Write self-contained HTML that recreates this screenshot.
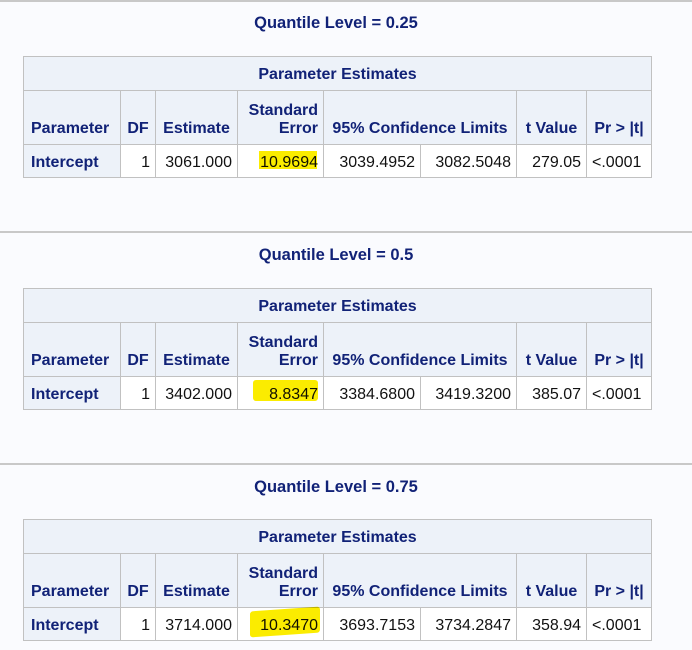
<!DOCTYPE html>
<html><head><style>
html,body{margin:0;padding:0;width:692px;height:650px;overflow:hidden;background:#fafbfe;font-family:"Liberation Sans",Arial,sans-serif}
.sep{position:absolute;left:0;width:692px;height:2px;background:#c8c8c8}
.title{position:absolute;left:0;width:672px;text-align:center;font-weight:bold;font-size:16.5px;color:#112277}
table{position:absolute;left:23px;border-collapse:collapse;font-size:16px;table-layout:fixed;width:628px;z-index:0}
td,th{border:1px solid #c1c1c1;padding:0 5px;white-space:nowrap;overflow:visible}
th{background:#edf2f9;color:#112277;font-weight:bold;font-size:16px}
td{background:#fff;color:#111;text-align:right;padding-top:3px}
td.rh{background:#edf2f9;color:#112277;font-weight:bold;text-align:left;padding-left:7px}
.hl{position:absolute;background:#fbec00;z-index:2;mix-blend-mode:multiply}
.hb th{vertical-align:bottom;padding-bottom:6px}
.t th{padding-top:2px}
</style></head><body>

<div class="sep" style="top:0"></div>
<div class="sep" style="top:231px"></div>
<div class="sep" style="top:463px"></div>

<div class="title" style="top:14px">Quantile Level = 0.25</div>
<div class="title" style="top:246px">Quantile Level = 0.5</div>
<div class="title" style="top:478px">Quantile Level = 0.75</div>

<table style="top:56px">
<colgroup><col style="width:97px"><col style="width:35px"><col style="width:82px"><col style="width:86px"><col style="width:97px"><col style="width:96px"><col style="width:70px"><col style="width:65px"></colgroup>
<tr class="t" style="height:34px"><th colspan="8">Parameter Estimates</th></tr>
<tr class="hb" style="height:54px"><th style="text-align:left;padding-left:7px">Parameter</th><th>DF</th><th>Estimate</th><th style="text-align:right">Standard<br>Error</th><th colspan="2">95% Confidence Limits</th><th>t Value</th><th>Pr &gt; |t|</th></tr>
<tr style="height:33px"><td class="rh">Intercept</td><td>1</td><td>3061.000</td><td>10.9694</td><td>3039.4952</td><td>3082.5048</td><td>279.05</td><td style="text-align:left">&lt;.0001</td></tr>
</table>

<table style="top:288px">
<colgroup><col style="width:97px"><col style="width:35px"><col style="width:82px"><col style="width:86px"><col style="width:97px"><col style="width:96px"><col style="width:70px"><col style="width:65px"></colgroup>
<tr class="t" style="height:34px"><th colspan="8">Parameter Estimates</th></tr>
<tr class="hb" style="height:54px"><th style="text-align:left;padding-left:7px">Parameter</th><th>DF</th><th>Estimate</th><th style="text-align:right">Standard<br>Error</th><th colspan="2">95% Confidence Limits</th><th>t Value</th><th>Pr &gt; |t|</th></tr>
<tr style="height:33px"><td class="rh">Intercept</td><td>1</td><td>3402.000</td><td>8.8347</td><td>3384.6800</td><td>3419.3200</td><td>385.07</td><td style="text-align:left">&lt;.0001</td></tr>
</table>

<table style="top:519px">
<colgroup><col style="width:97px"><col style="width:35px"><col style="width:82px"><col style="width:86px"><col style="width:97px"><col style="width:96px"><col style="width:70px"><col style="width:65px"></colgroup>
<tr class="t" style="height:34px"><th colspan="8">Parameter Estimates</th></tr>
<tr class="hb" style="height:54px"><th style="text-align:left;padding-left:7px">Parameter</th><th>DF</th><th>Estimate</th><th style="text-align:right">Standard<br>Error</th><th colspan="2">95% Confidence Limits</th><th>t Value</th><th>Pr &gt; |t|</th></tr>
<tr style="height:33px"><td class="rh">Intercept</td><td>1</td><td>3714.000</td><td>10.3470</td><td>3693.7153</td><td>3734.2847</td><td>358.94</td><td style="text-align:left">&lt;.0001</td></tr>
</table>

<div class="hl" style="left:259px;top:151px;width:58px;height:18px"></div>
<div class="hl" style="left:253px;top:380px;width:65px;height:21px;border-radius:3px"></div>
<div class="hl" style="left:250px;top:609px;width:70px;height:26px;transform:skewY(-4deg);border-radius:3px"></div>

</body></html>
